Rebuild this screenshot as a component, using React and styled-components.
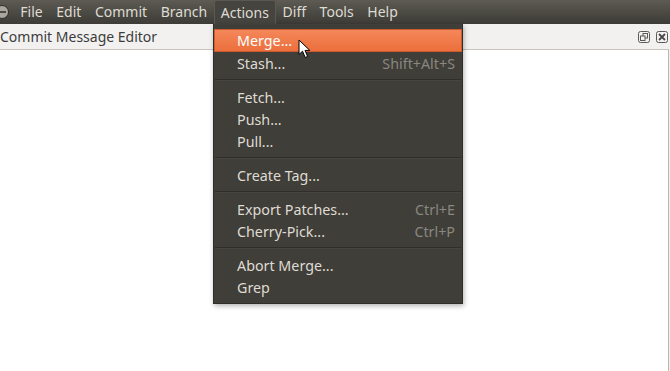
import React from "react";
import styled, { createGlobalStyle } from "styled-components";

const GlobalStyle = createGlobalStyle`
  html, body { margin: 0; padding: 0; }
  body {
    overflow: hidden;
    font-family: "Noto Sans", "Open Sans", "DejaVu Sans", sans-serif;
    -webkit-font-smoothing: antialiased;
  }
`;

const Page = styled.div`
  position: relative;
  width: 670px;
  height: 371px;
  display: flex;
  flex-direction: column;
  background: #f2f1f0;
  overflow: hidden;
`;

const MenuBar = styled.div`
  height: 24px;
  flex: none;
  display: flex;
  align-items: stretch;
  background: linear-gradient(#5d5b53, #45443e 70%, #3d3c37);
`;

const AppIcon = styled.svg`
  width: 13.5px;
  height: 24px;
  flex: none;
`;

const TopItem = styled.div`
  display: flex;
  align-items: center;
  padding: 0 ${(p) => (p.$active ? 5.8 : 6.8)}px 1px;
  font-size: 14px;
  color: #dfdbd2;
  box-sizing: border-box;
  ${(p) =>
    p.$active &&
    `
    background: #45443f;
    border: 1px solid #5a5852;
    border-bottom: none;
    border-radius: 3px 3px 0 0;
  `}
`;

const PanelHeader = styled.div`
  height: 25px;
  flex: none;
  display: flex;
  align-items: center;
  justify-content: space-between;
  padding-right: 2px;
`;

const PanelTitle = styled.span`
  font-size: 14px;
  color: #3c3c3c;
`;

const PanelButtons = styled.div`
  display: flex;
  gap: 6px;
  align-items: center;
`;

const PanelButton = styled.svg`
  width: 12px;
  height: 12px;
  display: block;
`;

const Editor = styled.div`
  flex: 1;
  background: #ffffff;
  border-top: 1px solid #c8c5bf;
  border-right: 1px solid #b9b6b0;
  margin-right: 1px;
`;

const Dropdown = styled.div`
  position: absolute;
  left: 213px;
  top: 24px;
  width: 250px;
  box-sizing: border-box;
  padding: 5px 0 5px;
  background: #3f3e39;
  border: 1px solid #2f2e2b;
  border-top: none;
  box-shadow: 1px 2px 5px rgba(0, 0, 0, 0.3);
`;

const Item = styled.div`
  box-sizing: border-box;
  height: ${(p) => (p.$hover ? 23 : 22)}px;
  display: flex;
  align-items: center;
  justify-content: space-between;
  padding: 0 7px 0 23px;
  font-size: 14.3px;
  color: ${(p) => (p.$hover ? "#ffffff" : "#dfdbd2")};
  ${(p) =>
    p.$hover &&
    `
    background: linear-gradient(#f4875a, #ec6f3c);
    border: 1px solid #c85a2d;
    padding-left: 22px;
  `}
`;

const Shortcut = styled.span`
  color: #8a8780;
`;

const Separator = styled.div`
  height: 0;
  margin: 5px 1px 5px;
  border-top: 1px solid #2f2e2a;
  border-bottom: 1px solid #46453f;
`;

const Cursor = styled.svg`
  position: absolute;
  left: 298px;
  top: 39px;
  width: 13px;
  height: 20px;
`;

const menus = ["File", "Edit", "Commit", "Branch", "Actions", "Diff", "Tools", "Help"];

const groups = [
  [
    { label: "Merge...", hover: true },
    { label: "Stash...", sc: "Shift+Alt+S" },
  ],
  [{ label: "Fetch..." }, { label: "Push..." }, { label: "Pull..." }],
  [{ label: "Create Tag..." }],
  [
    { label: "Export Patches...", sc: "Ctrl+E" },
    { label: "Cherry-Pick...", sc: "Ctrl+P" },
  ],
  [{ label: "Abort Merge..." }, { label: "Grep" }],
];

export default function App() {
  return (
    <>
      <GlobalStyle />
      <Page>
        <MenuBar>
          <AppIcon viewBox="0 0 13.5 24">
            <circle cx="2" cy="12" r="6.5" fill="#a8a69f" stroke="#2f2e2b" strokeWidth="1" />
            <rect x="-2" y="11" width="8" height="2" fill="#4a4944" />
          </AppIcon>
          {menus.map((m) => (
            <TopItem key={m} $active={m === "Actions"}>
              {m}
            </TopItem>
          ))}
        </MenuBar>
        <PanelHeader>
          <PanelTitle>Commit Message Editor</PanelTitle>
          <PanelButtons>
            <PanelButton viewBox="0 0 12 12">
              <rect x="0.5" y="0.5" width="11" height="11" rx="2" fill="none" stroke="#5a5955" />
              <rect x="5" y="2.5" width="4.5" height="4.5" fill="none" stroke="#5a5955" />
              <rect x="2.5" y="5" width="4.5" height="4.5" fill="#f2f1f0" stroke="#5a5955" />
            </PanelButton>
            <PanelButton viewBox="0 0 12 12">
              <rect x="0.5" y="0.5" width="11" height="11" rx="2" fill="none" stroke="#5a5955" />
              <path d="M3 3 L9 9 M9 3 L3 9" stroke="#4a4945" strokeWidth="1.8" />
            </PanelButton>
          </PanelButtons>
        </PanelHeader>
        <Editor />
        <Dropdown>
          {groups.map((g, gi) => (
            <React.Fragment key={gi}>
              {gi > 0 && <Separator />}
              {g.map((it) => (
                <Item key={it.label} $hover={it.hover}>
                  <span>{it.label}</span>
                  {it.sc && <Shortcut>{it.sc}</Shortcut>}
                </Item>
              ))}
            </React.Fragment>
          ))}
        </Dropdown>
        <Cursor viewBox="0 0 13 20">
          <path
            d="M1 1 L1 15.5 L4.5 12.2 L7.2 18.5 L9.6 17.4 L7 11.4 L11.8 11.4 Z"
            fill="#ffffff"
            stroke="#000000"
            strokeWidth="1"
            strokeLinejoin="round"
          />
        </Cursor>
      </Page>
    </>
  );
}
